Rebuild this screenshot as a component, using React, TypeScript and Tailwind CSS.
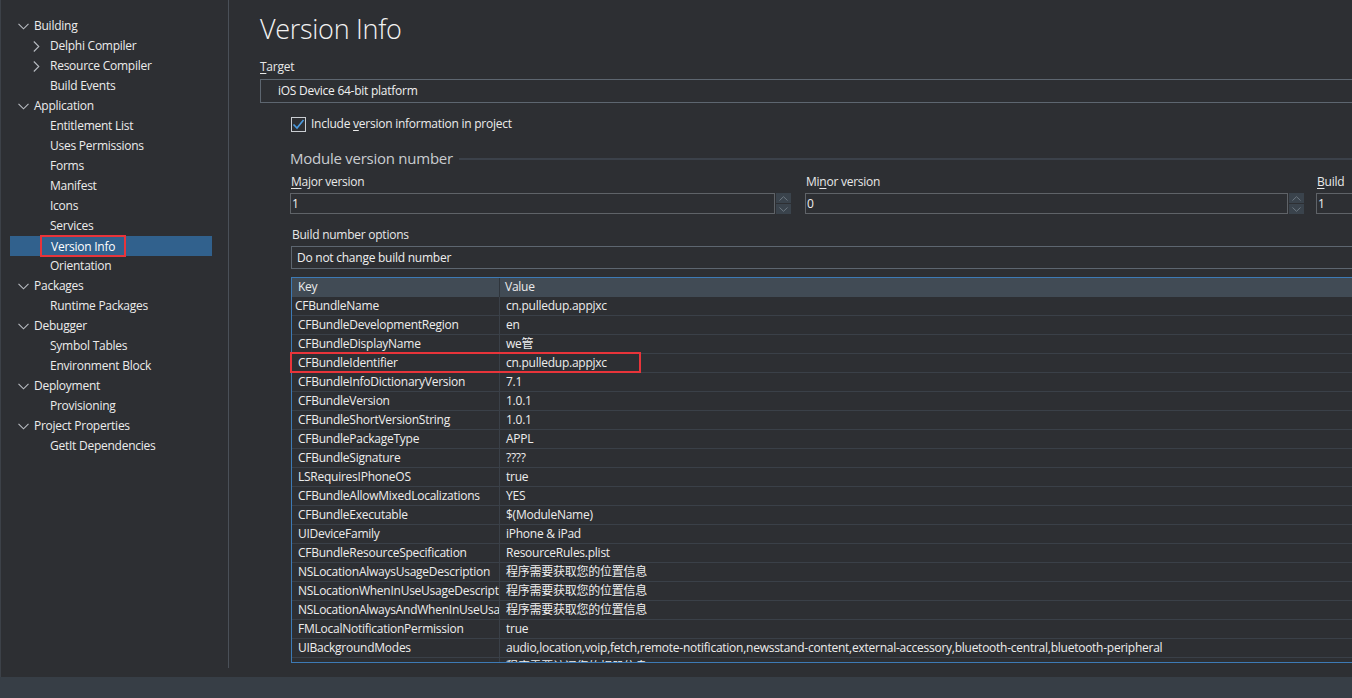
import React from "react"

type TreeItem = { label: string; level: 0 | 1; arrow?: "down" | "right"; selected?: boolean }

const TREE: TreeItem[] = [
  { label: "Building", level: 0, arrow: "down" },
  { label: "Delphi Compiler", level: 1, arrow: "right" },
  { label: "Resource Compiler", level: 1, arrow: "right" },
  { label: "Build Events", level: 1 },
  { label: "Application", level: 0, arrow: "down" },
  { label: "Entitlement List", level: 1 },
  { label: "Uses Permissions", level: 1 },
  { label: "Forms", level: 1 },
  { label: "Manifest", level: 1 },
  { label: "Icons", level: 1 },
  { label: "Services", level: 1 },
  { label: "Version Info", level: 1, selected: true },
  { label: "Orientation", level: 1 },
  { label: "Packages", level: 0, arrow: "down" },
  { label: "Runtime Packages", level: 1 },
  { label: "Debugger", level: 0, arrow: "down" },
  { label: "Symbol Tables", level: 1 },
  { label: "Environment Block", level: 1 },
  { label: "Deployment", level: 0, arrow: "down" },
  { label: "Provisioning", level: 1 },
  { label: "Project Properties", level: 0, arrow: "down" },
  { label: "GetIt Dependencies", level: 1 },
]

const LOC = "程序需要获取您的位置信息"

const ROWS: [string, string][] = [
  ["CFBundleName", "cn.pulledup.appjxc"],
  ["CFBundleDevelopmentRegion", "en"],
  ["CFBundleDisplayName", "we管"],
  ["CFBundleIdentifier", "cn.pulledup.appjxc"],
  ["CFBundleInfoDictionaryVersion", "7.1"],
  ["CFBundleVersion", "1.0.1"],
  ["CFBundleShortVersionString", "1.0.1"],
  ["CFBundlePackageType", "APPL"],
  ["CFBundleSignature", "????"],
  ["LSRequiresIPhoneOS", "true"],
  ["CFBundleAllowMixedLocalizations", "YES"],
  ["CFBundleExecutable", "$(ModuleName)"],
  ["UIDeviceFamily", "iPhone & iPad"],
  ["CFBundleResourceSpecification", "ResourceRules.plist"],
  ["NSLocationAlwaysUsageDescription", LOC],
  ["NSLocationWhenInUseUsageDescription", LOC],
  ["NSLocationAlwaysAndWhenInUseUsageDescription", LOC],
  ["FMLocalNotificationPermission", "true"],
  ["UIBackgroundModes", "audio,location,voip,fetch,remote-notification,newsstand-content,external-accessory,bluetooth-central,bluetooth-peripheral"],
  ["", "程序需要访问您的相册信息"],
]

const FONT = { fontFamily: '"Open Sans", "Noto Sans CJK SC", sans-serif' }

function ChevronDown() {
  return (
    <svg width="11" height="7" viewBox="0 0 11 7">
      <path d="M0.5 0.8 L5.5 5.8 L10.5 0.8" fill="none" stroke="#b8bcc2" strokeWidth="1.1" />
    </svg>
  )
}

function ChevronRight() {
  return (
    <svg width="7" height="11" viewBox="0 0 7 11">
      <path d="M0.8 0.5 L5.8 5.5 L0.8 10.5" fill="none" stroke="#b8bcc2" strokeWidth="1.1" />
    </svg>
  )
}

function Spin() {
  return (
    <div className="flex flex-col w-[15px] h-[21px] gap-px ml-px">
      <div className="flex-1 bg-[#3a434c] flex items-center justify-center">
        <svg width="9" height="5" viewBox="0 0 9 5">
          <path d="M0.5 4.5 L4.5 0.7 L8.5 4.5" fill="none" stroke="#6d7781" strokeWidth="1" />
        </svg>
      </div>
      <div className="flex-1 bg-[#3a434c] flex items-center justify-center">
        <svg width="9" height="5" viewBox="0 0 9 5">
          <path d="M0.5 0.5 L4.5 4.3 L8.5 0.5" fill="none" stroke="#6d7781" strokeWidth="1" />
        </svg>
      </div>
    </div>
  )
}

function NumberField({ label, accessIndex, value, width, className = "" }: { label: string; accessIndex: number; value: string; width: string; className?: string }) {
  return (
    <div className={`flex flex-col ${className}`}>
      <div className="h-[16px] leading-[16px] text-[12px] text-[#e8e8e8] pl-px">
        {label.slice(0, accessIndex)}
        <span className="underline underline-offset-2">{label[accessIndex]}</span>
        {label.slice(accessIndex + 1)}
      </div>
      <div className="flex mt-[3px]">
        <div className={`${width} h-[21px] border border-[#5f6368] px-[1px] text-[12px] leading-[19px] text-[#f0f0f0]`}>
          {value}
        </div>
        <Spin />
      </div>
    </div>
  )
}

export default function App() {
  return (
    <div className="relative w-[1352px] h-[698px] bg-[#2d2f33] flex flex-col overflow-hidden text-[#e6e6e6] tracking-[-0.25px]" style={FONT}>
      <div className="flex flex-1 min-h-0">
        {/* Sidebar tree */}
        <div className="w-[229px] shrink-0 border-l border-[#3c4148] pt-[16px] pb-[9px] flex">
          <div className="flex-1 flex flex-col">
            {TREE.map((t) => (
              <div
                key={t.label}
                className={`h-[20px] flex items-center text-[12px] ml-[9px] w-[202px] ${t.selected ? "bg-[#31618d]" : ""}`}
              >
                {t.level === 0 ? (
                  <>
                    <div className="w-[24px] flex justify-center pl-[3px]">
                      <ChevronDown />
                    </div>
                    <span className="text-[#ececec]">{t.label}</span>
                  </>
                ) : (
                  <>
                    <div className="w-[40px] flex justify-end pr-[10px]">{t.arrow === "right" ? <ChevronRight /> : null}</div>
                    {t.selected ? (
                      <span className="-ml-[10px] px-[9px] h-[22px] leading-[19px] border-2 border-[#e8343a] text-white">
                        {t.label}
                      </span>
                    ) : (
                      <span className="text-[#ececec]">{t.label}</span>
                    )}
                  </>
                )}
              </div>
            ))}
          </div>
          <div className="w-px bg-[#4a5058] self-stretch -mt-[16px]" />
        </div>

        {/* Main panel */}
        <div className="flex-1 min-w-0 overflow-hidden pl-[31px] pt-[13px]">
          <div className="h-[32px] leading-[32px] text-[27px] font-light text-[#f2f2f2] tracking-[-0.3px]">Version Info</div>

          <div className="mt-[14px] h-[16px] leading-[16px] text-[12px] text-[#e8e8e8]">
            <span className="underline underline-offset-2">T</span>arget
          </div>
          <div className="mt-[4px] w-[1150px] h-[24px] border border-[#5d6670] pl-[17px] text-[12px] leading-[22px] text-[#f0f0f0]">
            iOS Device 64-bit platform
          </div>

          <div className="mt-[13px] ml-[31px] h-[16px] flex items-center gap-[5px] text-[12px] text-[#ececec]">
            <div className="w-[15px] h-[15px] border border-[#c9cdd2] flex items-center justify-center">
              <svg width="13" height="11" viewBox="0 0 13 11">
                <path d="M1.5 5.5 L5 9 L11.5 1" fill="none" stroke="#4b9be0" strokeWidth="1.6" />
              </svg>
            </div>
            <span>
              Include <span className="underline underline-offset-2">v</span>ersion information in project
            </span>
          </div>

          <div className="ml-[30px]">
            <div className="mt-[16px] h-[20px] flex items-center gap-[6px]">
              <span className="text-[15px] text-[#c9ccd0] leading-[20px]">Module version number</span>
              <div className="flex-1 h-[2px] bg-[#3b414a] mt-[2px]" />
            </div>

            <div className="mt-[6px] flex">
              <NumberField label="Major version" accessIndex={0} value="1" width="w-[485px]" />
              <NumberField label="Minor version" accessIndex={2} value="0" width="w-[483px]" className="ml-[14px]" />
              <NumberField label="Build" accessIndex={0} value="1" width="w-[200px]" className="ml-[12px]" />
            </div>

            <div className="mt-[13px] pl-[2px] h-[16px] leading-[16px] text-[12px] text-[#e8e8e8]">Build number options</div>
            <div className="mt-[3px] ml-px w-[1120px] h-[23px] border border-[#5d6670] pl-[5px] text-[12px] leading-[21px] text-[#f0f0f0]">
              Do not change build number
            </div>

            {/* Key / Value grid */}
            <div className="mt-[8px] ml-px w-[1120px] h-[386px] border border-[#3d7ab5] overflow-hidden">
              <div className="h-[19px] flex bg-[#414b55] text-[12px] leading-[18px] text-[#ececec]">
                <div className="w-[208px] pl-[6px] border-r border-[#2f353c]">Key</div>
                <div className="flex-1 pl-[5px]">Value</div>
              </div>
              {ROWS.map(([k, v], i) => (
                <div key={i} className="h-[19px] flex border-b border-[#3a4048] text-[12px] leading-[18px] text-[#ededed]">
                  <div className={`w-[208px] shrink-0 border-r border-[#3a4048] overflow-hidden whitespace-nowrap ${i === 0 ? "pl-[3px]" : "pl-[6px]"}`}>
                    {k}
                  </div>
                  <div className="flex-1 pl-[6px] whitespace-nowrap overflow-hidden">{v}</div>
                </div>
              ))}
            </div>
          </div>
        </div>
      </div>
      <div className="h-[21px] bg-[#373e46] shrink-0" />
      <div className="absolute left-[290px] top-[352px] w-[351px] h-[21px] border-2 border-[#e8343a] pointer-events-none" />
    </div>
  )
}
